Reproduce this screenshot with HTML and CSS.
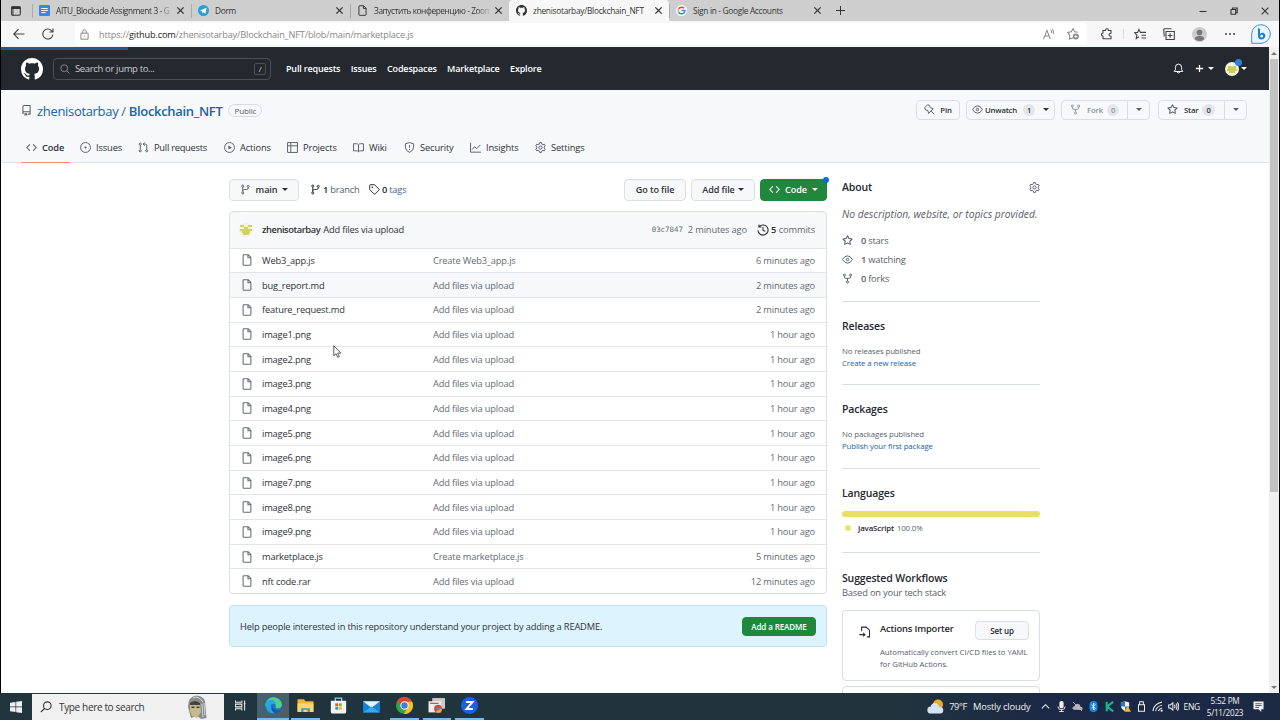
FILE: index.html
```html
<!DOCTYPE html>
<html lang="en">
<head>
  <meta charset="UTF-8" />
  <title>zhenisotarbay/Blockchain_NFT</title>
  <link rel="stylesheet" href="styles.css">
</head>
<body>
  <svg class="sprite">
    <symbol id="i-mark" viewBox="0 0 16 16"><path d="M8 0c4.42 0 8 3.58 8 8a8.013 8.013 0 0 1-5.45 7.59c-.4.08-.55-.17-.55-.38 0-.27.01-1.13.01-2.2 0-.75-.25-1.23-.54-1.48 1.78-.2 3.65-.88 3.65-3.95 0-.88-.31-1.59-.82-2.15.08-.2.36-1.02-.08-2.12 0 0-.67-.22-2.2.82-.64-.18-1.32-.27-2-.27-.68 0-1.36.09-2 .27-1.53-1.03-2.2-.82-2.2-.82-.44 1.1-.16 1.92-.08 2.12-.51.56-.82 1.28-.82 2.15 0 3.06 1.86 3.75 3.64 3.95-.23.2-.44.55-.51 1.07-.46.21-1.61.55-2.33-.66-.15-.24-.6-.83-1.23-.82-.67.01-.27.38.01.53.34.19.73.9.82 1.13.16.45.68 1.31 2.69.94 0 .67.01 1.3.01 1.49 0 .21-.15.45-.55.38A7.995 7.995 0 0 1 0 8c0-4.42 3.58-8 8-8Z"/></symbol>
    <symbol id="i-repo" viewBox="0 0 16 16"><path d="M2 2.5A2.5 2.5 0 0 1 4.5 0h8.75a.75.75 0 0 1 .75.75v12.5a.75.75 0 0 1-.75.75h-2.5a.75.75 0 0 1 0-1.5h1.75v-2h-8a1 1 0 0 0-.714 1.7.75.75 0 1 1-1.072 1.05A2.495 2.495 0 0 1 2 11.5Zm10.5-1h-8a1 1 0 0 0-1 1v6.708A2.486 2.486 0 0 1 4.5 9h8ZM5 12.25a.25.25 0 0 1 .25-.25h3.5a.25.25 0 0 1 .25.25v3.25a.25.25 0 0 1-.4.2l-1.45-1.087a.249.249 0 0 0-.3 0L5.4 15.7a.25.25 0 0 1-.4-.2Z"/></symbol>
    <symbol id="i-code" viewBox="0 0 16 16"><path d="m11.28 3.22 4.25 4.25a.75.75 0 0 1 0 1.06l-4.25 4.25a.749.749 0 0 1-1.275-.326.749.749 0 0 1 .215-.734L13.94 8l-3.72-3.72a.749.749 0 0 1 .326-1.275.749.749 0 0 1 .734.215Zm-6.56 0a.751.751 0 0 1 1.042.018.751.751 0 0 1 .018 1.042L2.06 8l3.72 3.72a.749.749 0 0 1-.326 1.275.749.749 0 0 1-.734-.215L.47 8.53a.75.75 0 0 1 0-1.06Z"/></symbol>
    <symbol id="i-star" viewBox="0 0 16 16"><path d="M8 .25a.75.75 0 0 1 .673.418l1.882 3.815 4.21.612a.75.75 0 0 1 .416 1.279l-3.046 2.97.719 4.192a.751.751 0 0 1-1.088.791L8 12.347l-3.766 1.98a.75.75 0 0 1-1.088-.79l.72-4.194L.818 6.374a.75.75 0 0 1 .416-1.28l4.21-.611L7.327.668A.75.75 0 0 1 8 .25Zm0 2.445L6.615 5.5a.75.75 0 0 1-.564.41l-3.097.45 2.24 2.184a.75.75 0 0 1 .216.664l-.528 3.084 2.769-1.456a.75.75 0 0 1 .698 0l2.77 1.456-.53-3.084a.75.75 0 0 1 .216-.664l2.24-2.183-3.096-.45a.75.75 0 0 1-.564-.41L8 2.694Z"/></symbol>
    <symbol id="i-issue" viewBox="0 0 16 16"><circle class="ln" cx="8" cy="8" r="7.2"/><circle cx="8" cy="8" r="1.5"/></symbol>
    <symbol id="i-play" viewBox="0 0 16 16"><circle class="ln" cx="8" cy="8" r="7.2"/><path d="M6.4 5v6l5-3Z"/></symbol>
    <symbol id="i-pull" viewBox="0 0 16 16"><g class="ln"><circle cx="3.3" cy="3.2" r="1.5"/><circle cx="3.3" cy="12.8" r="1.5"/><circle cx="12.7" cy="12.8" r="1.5"/><path d="M3.3 4.8v6.4M12.7 11.2V5q0-2-2-2H7.5M9.8.8 7.4 3l2.4 2.3"/></g></symbol>
    <symbol id="i-table" viewBox="0 0 16 16"><path class="ln" d="M.8.8h14.4v14.4H.8ZM.8 5.5h14.4M5.5.8v14.4"/></symbol>
    <symbol id="i-book" viewBox="0 0 16 16"><path class="ln" d="M8 4Q7 2.5 5 2.5H.8v10.3H5q2 0 3 1.4V4Q9 2.5 11 2.5h4.2v10.3H11q-2 0-3 1.4"/></symbol>
    <symbol id="i-shield" viewBox="0 0 16 16"><path class="ln" d="M8 .8 14 2.7v4.6q0 5.3-6 7.8-6-2.5-6-7.8V2.7Z"/><path class="ln" d="M8 4.3v4M8 10v1.6"/></symbol>
    <symbol id="i-graph" viewBox="0 0 16 16"><path class="ln" d="M.8 1v13.8H16M3 11l3.7-4.3 3 3L15 4.3"/></symbol>
    <symbol id="i-gear" viewBox="0 0 16 16"><path class="ln" d="M6.6.9h2.8l.5 2.2 1.4.8 2.2-.7 1.4 2.4-1.6 1.6v1.6l1.6 1.6-1.4 2.4-2.2-.7-1.4.8-.5 2.2H6.6l-.5-2.200-1.400-.8-2.200.7-1.400-2.400 1.600-1.600V7.200L1.100 5.600l1.400-2.400 2.200.7 1.400-.8Z"/><circle class="ln" cx="8" cy="8" r="2.300"/></symbol>
    <symbol id="i-pin" viewBox="0 0 16 16"><path class="ln" d="M5.300 1 1 5.300l1.200 3.400 3.300.5 1.300 4.500 3.300-3.500 3.400-3.400-4.300-1.500L7.800 2ZM10 10l5 5"/></symbol>
    <symbol id="i-eye" viewBox="0 0 16 16"><path class="ln" d="M.8 8Q3.800 2.700 8 2.700T15.200 8Q12.200 13.300 8 13.300T.8 8Z"/><circle class="ln" cx="8" cy="8" r="1.800"/></symbol>
    <symbol id="i-fork" viewBox="0 0 16 16"><g class="ln"><circle cx="3.500" cy="3" r="1.500"/><circle cx="12.500" cy="3" r="1.500"/><circle cx="8" cy="13.200" r="1.500"/><path d="M3.500 4.500V6Q3.500 7.800 5.300 7.800h5.400Q12.500 7.800 12.500 6V4.500M8 8v3.700"/></g></symbol>
    <symbol id="i-branch" viewBox="0 0 16 16"><g class="ln"><circle cx="4" cy="3" r="1.500"/><circle cx="4" cy="13" r="1.500"/><circle cx="12" cy="3.500" r="1.500"/><path d="M4 4.500v7M12 5v.7Q12 8 9.700 8H6.500Q4 8 4 10"/></g></symbol>
    <symbol id="i-tag" viewBox="0 0 16 16"><path class="ln" d="M2.200 1h5.200q.6 0 1 .4l6 6q.8.8 0 1.600l-5.400 5.400q-.8.8-1.600 0l-6-6Q1 8 1 7.400V2.200Q1 1 2.200 1Z"/><circle cx="4.900" cy="4.900" r="1.200"/></symbol>
    <symbol id="i-file" viewBox="0 0 16 16"><path class="ln" d="M3.800 1h5.800l3.600 3.600V14q0 1-1 1H3.800q-1 0-1-1V2q0-1 1-1ZM9.300 1v4h4"/></symbol>
    <symbol id="i-history" viewBox="0 0 16 16"><path class="ln" d="M1.200 8.500A6.800 6.800 0 1 0 3 3.400M2.500.8l.2 3.100 3.100.2M8 4v4.500l3 1.300"/></symbol>
    <symbol id="i-bell" viewBox="0 0 16 16"><path class="ln" d="M3.500 6.500Q3.500 1.500 8 1.500t4.500 5v3l1.700 2.800H1.800L3.500 9.500ZM6 13.500q2 2 4 0"/></symbol>
    <symbol id="i-search" viewBox="0 0 16 16"><circle class="ln" cx="6.800" cy="6.800" r="5.500"/><path class="ln" d="m11 11 4.300 4.300"/></symbol>
    <symbol id="i-x" viewBox="0 0 10 10"><path class="ln" d="m1.500 1.500 7 7m0-7-7 7"/></symbol>
    <symbol id="i-import" viewBox="0 0 16 16"><path class="ln" d="M3.500 7V1.500h6l4.500 4v9h-3.500M.5 11.500h7M5.500 9l2.500 2.500L5.500 14"/></symbol>
  </svg>

  <div class="window">
    <div class="tabstrip">
      <svg class="tabmenu" viewBox="0 0 10 10"><rect class="ln" x=".7" y=".7" width="8.600" height="8.600" rx="1.200"/><path d="M.5.5h9V3h-9Z"/><path d="M.5.5H3v9H.5Z" opacity=".4"/></svg>
      <div class="tab t1">
        <svg class="fav" viewBox="0 0 10 10"><rect width="10" height="10" rx="1" fill="#3f82e8"/><path d="M2 3.200h6M2 5h6M2 6.900h4" stroke="#fff" stroke-width=".9"/></svg>
        <span>AITU_Blockade Assignment 3 - G</span><svg class="x"><use href="#i-x"/></svg>
      </div>
      <div class="tab t2">
        <svg class="fav" viewBox="0 0 10 10"><circle cx="5" cy="5" r="5" fill="#2c9fd8"/><path d="m1.800 4.900 6-2.300-1.100 5.300-1.800-1.400-1 .9-.3-1.700Z" fill="#fff"/></svg>
        <span>Dorm</span><svg class="x"><use href="#i-x"/></svg>
      </div>
      <div class="tab t3">
        <svg class="fav"><use href="#i-file"/></svg>
        <span>Запустить конференцию - Zoom</span><svg class="x"><use href="#i-x"/></svg>
      </div>
      <div class="tab t4 active">
        <svg class="fav"><use href="#i-mark"/></svg>
        <span>zhenisotarbay/Blockchain_NFT</span><svg class="x"><use href="#i-x"/></svg>
      </div>
      <div class="tab t5">
        <svg class="fav" viewBox="0 0 12 12"><circle cx="6" cy="6" r="6" fill="#fff"/><g fill="none" stroke-width="1.700"><path d="M8.700 3.500A3.700 3.700 0 0 0 2.800 4.300" stroke="#e8453c"/><path d="M2.800 4.300a3.700 3.700 0 0 0 0 3.400" stroke="#f5b912"/><path d="M2.800 7.700a3.700 3.700 0 0 0 5.600 1.100" stroke="#38a853"/><path d="M8.400 8.800Q9.700 7.700 9.700 6H6" stroke="#4285f4"/></g></svg>
        <span>Sign in - Google Accounts</span><svg class="x"><use href="#i-x"/></svg>
      </div>
      <svg class="newtab" viewBox="0 0 10 10"><path class="ln" d="M5 0v10M0 5h10"/></svg>
      <div class="winctl">
        <svg viewBox="0 0 10 10"><path class="ln" d="M1.500 5.500h7"/></svg>
        <svg viewBox="0 0 10 10"><path class="ln" d="M2 3.500h4.700v4.700H2ZM3.500 3.500V2H8.200v4.700H6.700"/></svg>
        <svg viewBox="0 0 10 10"><path class="ln" d="m1.700 1.700 6.600 6.600m0-6.600-6.600 6.600"/></svg>
      </div>
    </div>

    <div class="toolbar">
      <svg class="back" viewBox="0 0 12 12"><path class="ln" d="M11.500 6H1M5.500 1.200.8 6l4.700 4.800"/></svg>
      <svg class="reload" viewBox="0 0 12 12"><path class="ln" d="M10.800 6.500A5 5 0 1 1 9.500 2.600L11 4M11 .5V4H7.500"/></svg>
      <div class="address">
        <svg class="lock" viewBox="0 0 10 12"><path class="ln" d="M1 4.500h8v6.700H1ZM3 4.500V3q0-2.300 2-2.300T7 3v1.500"/><circle cx="5" cy="7.800" r=".8"/></svg>
        <span class="url">https://<b>github.com</b>/zhenisotarbay/Blockchain_NFT/blob/main/marketplace.js</span>
        <svg class="read" viewBox="0 0 12 12"><path class="ln" d="m.6 11 3.700-9.500L8 11M2 7.700h4.700M8.300.8q1.500 1.500.8 3.500M10.300.3q1.700 2.200.8 5"/></svg>
        <svg class="addfav" viewBox="0 0 12 12"><path class="ln" d="M6 10 2.500 11l.3-3.800L.7 4.500l3.500-.7L6 .8l1.800 3 3 .5"/><circle cx="8.800" cy="8.500" r="3"/><path d="M7.200 8.500h3.200M8.800 6.900v3.200" stroke="#fff" stroke-width=".8"/></svg>
      </div>
      <div class="tools">
        <svg viewBox="0 0 12 12"><path class="ln" d="M2 2.500h2.500Q4.500.8 6 .8t1.500 1.700H10v2.800Q8 5.300 8 6.800T10 8.300v2.400H2V8.200Q.5 8 .5 6.600T2 5Z"/></svg>
        <i class="sep"></i>
        <svg viewBox="0 0 12 12"><path class="ln" d="M4.800 8.700 2.300 10.500l.6-3.300L.7 4.800 3.600 4.400 5 1.500l1.400 2.900H12M7.500 7.300H12M7.500 10H12"/></svg>
        <svg viewBox="0 0 12 12"><path class="ln" d="M3 3.500h8.300v8H3ZM1.300 8.500.7 1.500Q.7.700 2 .7h6.500M7.100 5.200v4.600M4.800 7.500h4.600"/></svg>
        <svg class="me" viewBox="0 0 16 16"><circle cx="8" cy="8" r="8" fill="#ccc"/><circle cx="8" cy="5.800" r="3" fill="#777"/><path d="M3 13q0-3.500 5-3.500t5 3.500q-5 4-10 0Z" fill="#777"/></svg>
        <svg class="dots" viewBox="0 0 12 12"><circle cx="2" cy="6" r="1"/><circle cx="6" cy="6" r="1"/><circle cx="10" cy="6" r="1"/></svg>
        <svg class="bing" viewBox="0 0 20 20"><path d="M.7 19.300V10A9.300 9.300 0 1 1 10 19.300Z" fill="#eaf5ff" stroke="#3c8fd6" stroke-width="1"/><path d="m7 4 2 .8v5.200q1.200-1.700 3.200-1.200 2.300.8 2.200 3.200-.5 3-3.600 3.400Q7.500 15.500 7 12.500Zm2.200 8.300q.3 1.500 1.800 1.200 1.300-.5 1.200-1.700-.4-1.400-1.700-1-1.200.4-1.300 1.500Z" fill="#1a7fd4" fill-rule="evenodd"/></svg>
      </div>
    </div>

    <div class="viewport">
      <div class="page">
        <i class="progress"></i>
        <header class="gh-header">
          <svg class="logo"><use href="#i-mark"/></svg>
          <div class="gh-search"><svg><use href="#i-search"/></svg><span>Search or jump to...</span><kbd>/</kbd></div>
          <nav><a>Pull requests</a><a>Issues</a><a>Codespaces</a><a>Marketplace</a><a>Explore</a></nav>
          <div class="gh-user">
            <svg class="bell"><use href="#i-bell"/></svg>
            <svg class="plus" viewBox="0 0 10 10"><path class="ln" d="M5 1v8M1 5h8"/></svg><i class="caret"></i>
            <span class="avatar"><svg viewBox="0 0 14 14"><circle cx="7" cy="7" r="7" fill="#f4f3dc"/><path d="M3 4h3l1 1 1-1h3v3h1v2h-2v2H4V9H2V7h1Z" fill="#c9cf58"/></svg><i></i></span><i class="caret"></i>
          </div>
        </header>

        <div class="repo-head">
          <div class="repo-title">
            <svg><use href="#i-repo"/></svg>
            <a class="owner">zhenisotarbay</a><span class="slash">/</span><a class="repo">Blockchain_NFT</a>
            <span class="public">Public</span>
            <div class="actions">
              <div class="btn pin"><svg><use href="#i-pin"/></svg><span>Pin</span></div>
              <div class="btn watch"><svg><use href="#i-eye"/></svg><span>Unwatch</span><em>1</em><i class="caret"></i></div>
              <div class="btn split fork"><svg><use href="#i-fork"/></svg><span>Fork</span><em>0</em><div class="drop"><i class="caret"></i></div></div>
              <div class="btn split starbtn"><svg><use href="#i-star"/></svg><span>Star</span><em>0</em><div class="drop"><i class="caret"></i></div></div>
            </div>
          </div>
          <div class="repo-nav">
            <a class="n1 active"><svg><use href="#i-code"/></svg>Code</a>
            <a class="n2"><svg><use href="#i-issue"/></svg>Issues</a>
            <a class="n3"><svg><use href="#i-pull"/></svg>Pull requests</a>
            <a class="n4"><svg><use href="#i-play"/></svg>Actions</a>
            <a class="n5"><svg><use href="#i-table"/></svg>Projects</a>
            <a class="n6"><svg><use href="#i-book"/></svg>Wiki</a>
            <a class="n7"><svg><use href="#i-shield"/></svg>Security</a>
            <a class="n8"><svg><use href="#i-graph"/></svg>Insights</a>
            <a class="n9"><svg><use href="#i-gear"/></svg>Settings</a>
          </div>
        </div>

        <div class="container">
          <main>
            <div class="file-nav">
              <div class="btn branch"><svg><use href="#i-branch"/></svg><span>main</span><i class="caret"></i></div>
              <a class="stat s1"><svg><use href="#i-branch"/></svg><b>1</b> branch</a>
              <a class="stat s2"><svg><use href="#i-tag"/></svg><b>0</b> <span>tags</span></a>
              <div class="btn goto">Go to file</div>
              <div class="btn add">Add file<i class="caret"></i></div>
              <div class="btn green code"><svg><use href="#i-code"/></svg>Code<i class="caret"></i><i class="dot"></i></div>
            </div>

            <div class="files">
              <div class="commit">
                <svg class="ava" viewBox="0 0 14 14"><rect width="14" height="14" rx="7" fill="#f3f2dc"/><path d="M1 2h4v2H1ZM9 2h4v2H9ZM5 4h4v2h4v2h-2v2h-1v2H4v-2H3V8H1V6h4Z" fill="#cfd35f"/></svg>
                <b>zhenisotarbay</b><span class="msg">Add files via upload</span>
                <code>03c7847</code><span class="ago">2 minutes ago</span>
                <svg class="hist"><use href="#i-history"/></svg><b class="num">5</b><span class="commits">commits</span>
              </div>
              <div class="row"><svg><use href="#i-file"/></svg><a>Web3_app.js</a><span>Create Web3_app.js</span><time>6 minutes ago</time></div>
              <div class="row hover"><svg><use href="#i-file"/></svg><a>bug_report.md</a><span>Add files via upload</span><time>2 minutes ago</time></div>
              <div class="row"><svg><use href="#i-file"/></svg><a>feature_request.md</a><span>Add files via upload</span><time>2 minutes ago</time></div>
              <div class="row"><svg><use href="#i-file"/></svg><a>image1.png</a><span>Add files via upload</span><time>1 hour ago</time></div>
              <div class="row"><svg><use href="#i-file"/></svg><a>image2.png</a><span>Add files via upload</span><time>1 hour ago</time></div>
              <div class="row"><svg><use href="#i-file"/></svg><a>image3.png</a><span>Add files via upload</span><time>1 hour ago</time></div>
              <div class="row"><svg><use href="#i-file"/></svg><a>image4.png</a><span>Add files via upload</span><time>1 hour ago</time></div>
              <div class="row"><svg><use href="#i-file"/></svg><a>image5.png</a><span>Add files via upload</span><time>1 hour ago</time></div>
              <div class="row"><svg><use href="#i-file"/></svg><a>image6.png</a><span>Add files via upload</span><time>1 hour ago</time></div>
              <div class="row"><svg><use href="#i-file"/></svg><a>image7.png</a><span>Add files via upload</span><time>1 hour ago</time></div>
              <div class="row"><svg><use href="#i-file"/></svg><a>image8.png</a><span>Add files via upload</span><time>1 hour ago</time></div>
              <div class="row"><svg><use href="#i-file"/></svg><a>image9.png</a><span>Add files via upload</span><time>1 hour ago</time></div>
              <div class="row"><svg><use href="#i-file"/></svg><a>marketplace.js</a><span>Create marketplace.js</span><time>5 minutes ago</time></div>
              <div class="row"><svg><use href="#i-file"/></svg><a>nft code.rar</a><span>Add files via upload</span><time>12 minutes ago</time></div>
            </div>

            <div class="readme"><span>Help people interested in this repository understand your project by adding a README.</span><div class="btn green">Add a README</div></div>
          </main>

          <aside>
            <section class="about">
              <h2>About <svg><use href="#i-gear"/></svg></h2>
              <p class="desc">No description, website, or topics provided.</p>
              <p class="meta"><svg><use href="#i-star"/></svg><b>0</b> stars</p>
              <p class="meta"><svg><use href="#i-eye"/></svg><b>1</b> watching</p>
              <p class="meta"><svg><use href="#i-fork"/></svg><b>0</b> forks</p>
            </section>
            <section class="small">
              <h2>Releases</h2>
              <p>No releases published</p>
              <p><a>Create a new release</a></p>
            </section>
            <section class="small">
              <h2>Packages</h2>
              <p>No packages published</p>
              <p><a>Publish your first package</a></p>
            </section>
            <section class="langs">
              <h2>Languages</h2>
              <div class="bar"></div>
              <p><i></i><b>JavaScript</b> 100.0%</p>
            </section>
            <section class="flows">
              <h2>Suggested Workflows</h2>
              <p>Based on your tech stack</p>
              <div class="card">
                <svg><use href="#i-import"/></svg>
                <div class="card-body">
                  <div class="card-top"><b>Actions Importer</b><div class="btn">Set up</div></div>
                  <p>Automatically convert CI/CD files to YAML<br>for GitHub Actions.</p>
                </div>
              </div>
              <div class="card"></div>
            </section>
          </aside>
        </div>
      </div>
      <div class="scroll"><i class="up"></i><div class="thumb"></div><i class="down"></i></div>
    </div>
  </div>

  <div class="taskbar">
    <svg class="start" viewBox="0 0 12 12"><path d="M0 1.700 5.500.9v4.700H0ZM6.200.8 12 0v5.600H6.200ZM0 6.300h5.500V11L0 10.300ZM6.200 6.300H12V12l-5.800-.8Z"/></svg>
    <div class="find">
      <svg class="glass" viewBox="0 0 12 12"><circle class="ln" cx="7.300" cy="4.700" r="3.800"/><path class="ln" d="M4.500 7.500.8 11.200"/></svg>
      <span>Type here to search</span>
      <svg class="helmet" viewBox="0 0 20 24"><path d="M1 12Q1 1 10 .5 19 1 18.500 12L19.500 23 14 24 10 21 4 23Z" fill="#8a8d8d"/><path d="M3 9q4-6 10-1l1 9-4 6-5-2-2-5Z" fill="#c8b98d"/><path d="M3 8q5-4 10 0v2H3ZM4.500 11.500h3v1.500h-3ZM9.500 11.500h3v1.500h-3Z" fill="#43403a"/><path d="M6 3q5-3 10 4M15 9l1 13M17 8l1 12" stroke="#d2d5d5" fill="none"/></svg>
    </div>
    <div class="apps">
      <div><svg class="view" viewBox="0 0 12 12"><path class="ln" d="M.5.500v2h7v-2M.5 4.500h7v3h-7ZM.5 11.500v-2h7v2M10.500.5v11M9.500 4h2"/></svg></div>
      <div class="run cur"><svg viewBox="0 0 16 16"><circle cx="8" cy="8" r="8" fill="#1b76c8"/><path d="M1 5Q4-1 10 .5q6 2 6 7-1 4-6 3 1-6-4-5.500Q2 5 .3 9Q0 7 1 5Z" fill="#4fd08b"/><path d="M.5 6Q4 1 8.500 3.500q2 1.500 1.500 4Q7 5 5.500 8q-1 5 4.500 7Q1 16.500.5 6Z" fill="#2aa6de"/><path d="M7 8q0 4 5 4.500 2 0 3.200-.8-1.500 3-5 4Q5 14 7 8Z" fill="#155a9f"/></svg></div>
      <div class="run"><svg viewBox="0 0 16 16"><path d="M.5 2h6l1.500 2h7.500v10H.5Z" fill="#f2b737"/><path d="M.5 6h15v8H.5Z" fill="#fcd770"/><path d="M4 14v-3.500h8V14h-2v-2H6v2Z" fill="#3f8fd0"/></svg></div>
      <div><svg viewBox="0 0 16 16"><path d="M5 4V1h6v3" fill="none" stroke="#8bd0f5" stroke-width="1.200"/><path d="M.8 3.500h14.400V14q0 1.500-1.500 1.500H2.300Q.8 15.500.8 14Z" fill="#f3f3f3"/><path d="M5 6h2.700v2.700H5Z" fill="#e8502f"/><path d="M8.300 6H11v2.700H8.300Z" fill="#75b72a"/><path d="M5 9.300h2.700V12H5Z" fill="#1d9fe0"/><path d="M8.300 9.300H11V12H8.300Z" fill="#f5b81f"/></svg></div>
      <div><svg viewBox="0 0 16 16"><path d="M0 4h16v10.500H0Z" fill="#1682d2"/><path d="M0 4h16L8 10Z" fill="#e4f4fc"/><path d="M0 14.500 8 9l8 5.500Z" fill="#35a9ec"/></svg></div>
      <div class="run"><svg viewBox="0 0 16 16"><circle cx="8" cy="8" r="8" fill="#34a34f"/><path d="M8 8 1.100 4A8 8 0 0 1 14.900 4Z" fill="#e54335"/><path d="M8 4.500h7.200A8 8 0 0 1 7.500 16L11.500 9Z" fill="#fbc116"/><circle cx="8" cy="8" r="3.900" fill="#fff"/><circle cx="8" cy="8" r="3" fill="#3c7de6"/></svg></div>
      <div class="run"><svg viewBox="0 0 16 16"><path d="M4 1h12v10H4Z" fill="#c9c9c9"/><path d="M.5 4h12v10.500H.5Z" fill="#f0eeec"/><path d="M2 6h8" stroke="#d05149" stroke-width="1.200"/><circle cx="9.500" cy="11" r="3.700" fill="#d9473c"/><path d="M9.500 11h3.700a3.700 3.700 0 0 1-5.700 3.100Z" fill="#dfb437"/><circle cx="9.500" cy="11" r="1.600" fill="#4b86da"/></svg></div>
      <div class="run"><svg viewBox="0 0 16 16"><circle cx="8" cy="8" r="8" fill="#1763e6"/><path d="M4.800 4.800h6L5.200 11.200h6" fill="none" stroke="#fff" stroke-width="1.900"/></svg></div>
    </div>
    <div class="tray">
      <svg class="weather" viewBox="0 0 18 15"><circle cx="11" cy="5.500" r="5" fill="#f2a62c"/><path d="M4 14.500a3.500 3.500 0 0 1-.3-7Q4.500 4 8 4q3.500.3 4 3.800 4 0 4.300 3.200 0 3.500-3.300 3.500Z" fill="#d5e2f4"/></svg>
      <span class="temp">79°F</span><span class="sky">Mostly cloudy</span>
      <svg viewBox="0 0 12 12"><path class="ln" d="m2 8 4-4 4 4"/></svg>
      <svg viewBox="0 0 12 12"><rect x="3.700" y="0" width="4.600" height="8" rx="2"/><path d="M2 6q0 3.500 4 3.500T10 6M6 9v3M3.500 11.500h5" fill="none" stroke="currentColor"/></svg>
      <svg viewBox="0 0 12 12" opacity=".7"><path d="M2 9.500Q0 9 .5 7.200q.6-1.500 2-1.200Q3.500 3 6 3q3 .3 3.300 3.200Q12 6.500 11.500 9q-.5 1-2 .8Z"/><path d="m1 1 10 10" stroke="#fff"/></svg>
      <svg viewBox="0 0 12 12"><rect x="1.700" width="8.600" height="12" rx="4" fill="#1687e8"/><path d="m3.800 4 4 4L6 9.800V2.200L7.800 4l-4 4" fill="none" stroke="#fff" stroke-width=".9"/></svg>
      <svg viewBox="0 0 12 12"><path d="M3 .8v10.400M10 .8 3.500 6.300 10 11.200" fill="none" stroke="#17b890" stroke-width="2.300"/></svg>
      <svg viewBox="0 0 12 12"><path d="M1 1.500 5.500.3 10 1.500v4Q10 9 5.500 11 1 9 1 5.500Z" fill="#f4f4f4"/><path d="M5.500.3V6H1V1.500ZM5.500 6H10Q9.500 9 5.500 11Z" fill="#2977bd"/><path d="m8.300 5.500 3.700 6.300H4.700Z" fill="#f4b826"/></svg>
      <svg viewBox="0 0 12 12"><path class="ln" d="M4 4V.7h4V4M2.700 4h6.600v7.300H2.700Z"/></svg>
      <svg viewBox="0 0 12 12"><path class="ln" d="M1 11Q2 3 11 1M4 11q1-5 7-6.500M7 11q1-2.500 4-3.500"/><circle cx="10.500" cy="10.500" r="1.200"/></svg>
      <svg viewBox="0 0 12 12"><path class="ln" d="M.7 4.300h2L5.300 2v8L2.700 7.700h-2ZM7 4q1.300 2 0 4M8.700 2.700q2.300 3.300 0 6.600M10.300 1.500q3 4.500 0 9"/></svg>
      <span class="lang">ENG</span>
      <span class="clock">5:52 PM<br>5/11/2023</span>
      <svg class="note" viewBox="0 0 12 12"><path d="M.5.500h11v8.500H9V12L6 9H.5Z"/><path d="M2.500 3h7M2.500 5h7M2.500 7h4" stroke="#1c2b45" stroke-width=".8"/></svg>
    </div>
  </div>

  <svg class="cursor" viewBox="0 0 9 13"><path d="M.8.8v10l2.300-2.100 1.600 3.600 1.600-.7-1.600-3.500h3.200Z" fill="#fff" stroke="#333" stroke-width=".8"/></svg>
</body>
</html>
```

FILE: styles.css
```css
* {
  box-sizing: border-box;
}

html, body {
  margin: 0;
  padding: 0;
  font-family: "Open Sans", "Noto Sans", sans-serif;
  font-size: 9.3px;
  letter-spacing: -0.17px;
  color: #2d3238;
  background: #fff;
  overflow: hidden;
}

body {
  display: flex;
  flex-direction: column;
  width: 1280px;
  height: 720px;
}

svg {
  flex: none;
  fill: currentColor;
}

.ln {
  fill: none;
  stroke: currentColor;
  stroke-width: 1.4;
}

.tabstrip .ln, .toolbar .ln, .taskbar .ln {
  stroke-width: 1.1;
}

.sprite {
  display: none;
}

h2, p {
  margin: 0;
}

b {
  font-weight: 600;
}

.window {
  flex: 1;
  min-height: 0;
  display: flex;
  flex-direction: column;
  border-left: 1px solid #000;
  border-right: 1px solid #000;
}

/* browser tabs */
.tabstrip {
  display: flex;
  align-items: center;
  height: 21px;
  flex: none;
  background: #cecece;
  color: #333;
  font-size: 8.3px;
  letter-spacing: -0.3px;
}

.tabmenu {
  width: 10px;
  height: 10px;
  margin-left: 10px;
}

.tab {
  display: flex;
  align-items: center;
  height: 21px;
  padding-left: 7px;
  position: relative;
}

.tab::before {
  content: "";
  width: 1px;
  height: 14px;
  background: #aaa;
  position: absolute;
  left: 0;
}

.t1 { width: 159px; margin-left: 11px; }
.t2 { width: 159px; }
.t3 { width: 159px; }
.t4 { width: 160px; }
.t5 { width: 159px; }

.tab .fav {
  width: 11px;
  height: 11px;
  margin-right: 6px;
}

.tab span {
  flex: 1;
  overflow: hidden;
  white-space: nowrap;
  margin-right: 3px;
}

.t1 span, .t3 span {
  -webkit-mask-image: linear-gradient(90deg, #000 88%, transparent);
}

.t1 span { letter-spacing: -0.36px; }
.t3 span { letter-spacing: -0.42px; }
.t4 span { letter-spacing: -0.26px; }

.tab .x {
  width: 9px;
  height: 9px;
  margin-right: 6px;
}

.tab.active {
  background: #f7f7f7;
  border-radius: 4px 4px 0 0;
}

.active::before {
  display: none;
}

.newtab {
  width: 9px;
  height: 9px;
  margin-left: 8px;
}

.winctl {
  display: flex;
  gap: 21px;
  margin-left: auto;
  margin-right: 9px;
}

.winctl svg {
  width: 10px;
  height: 10px;
}

.toolbar {
  display: flex;
  align-items: center;
  flex: none;
  height: 26px;
  background: #f7f7f7;
  color: #444;
}

.back {
  width: 12px;
  height: 12px;
  margin-left: 12px;
}

.reload {
  width: 12px;
  height: 12px;
  margin-left: 17px;
}

.address {
  display: flex;
  align-items: center;
  width: 1012px;
  height: 22px;
  margin-left: 21px;
  background: #fff;
  border-radius: 3px;
  color: #888;
}

.lock {
  width: 9px;
  height: 11px;
  margin-left: 5px;
}

.url {
  margin-left: 10px;
  font-size: 9.2px;
}

.url b {
  font-weight: 400;
  color: #222;
}

.read {
  width: 11px;
  height: 11px;
  margin-left: auto;
}

.addfav {
  width: 12px;
  height: 12px;
  margin: 0 8px 0 13px;
}

.tools {
  display: flex;
  align-items: center;
  margin-left: 14px;
  gap: 17px;
}

.tools svg {
  width: 12px;
  height: 12px;
}

.sep {
  width: 1px;
  height: 10px;
  margin: 0 -7px;
  background: #ddd;
}

.tools .me {
  width: 15px;
  height: 15px;
}

.tools .bing {
  width: 20px;
  height: 20px;
  margin-left: -2px;
}

/* page */
.viewport {
  display: flex;
  flex: 1;
  min-height: 0;
}

.page {
  flex: 1;
  overflow: hidden;
  position: relative;
}

.progress {
  position: absolute;
  left: 0;
  top: 0;
  width: 127px;
  height: 3px;
  background: #1b5c9e;
}

.scroll {
  width: 10px;
  background: #f0f0f0;
  display: flex;
  flex-direction: column;
  align-items: center;
}

.up, .down {
  border: 3px solid transparent;
  border-bottom-color: #777;
  border-top: 0;
  margin: 5px 0 4px;
}

.thumb {
  width: 8px;
  height: 433px;
  background: #c2c2c2;
}

.down {
  border: 3px solid transparent;
  border-top-color: #777;
  border-bottom: 0;
  margin: auto 0 4px;
}

.caret {
  border: 3px solid transparent;
  border-top-color: currentColor;
  border-bottom: 0;
}

.gh-header {
  display: flex;
  align-items: center;
  height: 43px;
  padding-left: 20px;
  background: #24292f;
  color: #fff;
}

.logo {
  width: 22px;
  height: 22px;
}

.gh-search {
  display: flex;
  align-items: center;
  width: 218px;
  height: 22px;
  margin-left: 10px;
  padding: 0 4px 0 6px;
  border: 1px solid #4b5056;
  border-radius: 4px;
  color: #c9cccf;
  font-size: 9.5px;
  letter-spacing: -0.35px;
}

.gh-search span {
  letter-spacing: -0.35px;
}

.gh-search svg {
  width: 10px;
  height: 10px;
  margin-right: 5px;
  color: #8a8f94;
}

.gh-search kbd {
  margin-left: auto;
  width: 12px;
  height: 12px;
  border: 1px solid #4b5056;
  border-radius: 2px;
  font: 8px/10px "Open Sans", sans-serif;
  text-align: center;
}

.gh-header nav {
  display: flex;
  gap: 10.5px;
  margin-left: 15px;
  font-weight: 600;
  font-size: 9px;
}

.gh-user {
  display: flex;
  align-items: center;
  margin-left: auto;
  margin-right: 22px;
}

.bell {
  width: 11px;
  height: 11px;
  margin-right: 11px;
}

.plus {
  width: 9px;
  height: 9px;
  margin-right: 4px;
}

.avatar {
  position: relative;
  height: 14px;
  margin: 0 2px 0 11px;
}

.avatar svg {
  width: 14px;
  height: 14px;
}

.avatar i {
  position: absolute;
  right: -3px;
  top: -3px;
  width: 7px;
  height: 7px;
  border-radius: 50%;
  background: #2f7fdc;
}

.repo-head {
  height: 73px;
  padding: 9px 22px 0 20px;
  background: #f6f8fa;
  border-bottom: 1px solid #e1e4e8;
}

.repo-title {
  display: flex;
  align-items: center;
  height: 23px;
  font-size: 13px;
  letter-spacing: -0.32px;
}

.repo-title > svg {
  width: 11px;
  height: 11px;
  margin-right: 5px;
  color: #57606a;
}

.owner, .repo {
  color: #22639f;
}

.repo {
  font-weight: 600;
}

.slash {
  margin: 0 3px;
  color: #57606a;
}

.public {
  margin-left: 6px;
  padding: 0 5px;
  border: 1px solid #d8dce1;
  border-radius: 8px;
  font-size: 8px;
  letter-spacing: -0.1px;
  line-height: 11px;
  color: #57606a;
}

.actions {
  display: flex;
  gap: 6px;
  margin-left: auto;
  margin-bottom: 2px;
}

.btn {
  display: flex;
  align-items: center;
  justify-content: center;
  border: 1px solid #dcdfe2;
  border-radius: 4px;
  background: #f6f8fa;
  font-weight: 600;
  font-size: 9.1px;
  letter-spacing: -0.1px;
  white-space: nowrap;
}

.actions .btn {
  height: 20px;
  font-size: 7.8px;
  letter-spacing: -0.2px;
}

.actions .btn svg {
  width: 11px;
  height: 11px;
  color: #57606a;
}

.btn em {
  font-style: normal;
  background: #e3e6e9;
  border-radius: 6px;
  padding: 0 4px;
  margin-left: 4px;
  font-size: 7.5px;
  line-height: 12px;
}

.pin { width: 44px; gap: 5px; }
.watch { width: 89px; gap: 2px; }
.watch .caret { margin-left: 6px; }
.actions .fork { width: 89px; color: #8c959f; }
.actions .fork > svg { color: #8c959f; }
.starbtn { width: 89px; margin-left: 2px; }

.split span {
  margin-left: 6px;
}

.split .drop {
  display: flex;
  align-items: center;
  justify-content: center;
  width: 22px;
  height: 18px;
  margin-left: auto;
  border-left: 1px solid #d8dbde;
  color: #57606a;
}

.actions .split {
  justify-content: flex-start;
  padding-left: 8px;
}

.repo-nav {
  display: flex;
  height: 41px;
  padding-top: 10px;
  letter-spacing: -0.12px;
}

.repo-nav a {
  display: flex;
  align-items: center;
  height: 31px;
  padding-left: 5px;
}

.repo-nav svg {
  width: 11px;
  height: 11px;
  margin-right: 5px;
  color: #57606a;
}

.repo-nav .active {
  font-weight: 600;
  border-bottom: 1.5px solid #fd8c73;
}

.n1 { width: 49px; margin-right: 5px; }
.n2 { width: 58px; }
.n3 { width: 86px; letter-spacing: -0.25px; }
.n4 { width: 63px; }
.n5 { width: 66px; }
.n6 { width: 51px; }
.n7 { width: 66px; }
.n8 { width: 65px; }

.container {
  display: flex;
  gap: 15px;
  padding: 16px 0 0 228px;
}

main {
  width: 598px;
}

.file-nav {
  display: flex;
  align-items: center;
  height: 21px;
}

.file-nav .btn {
  height: 22px;
}

.file-nav svg {
  width: 11px;
  height: 11px;
}

.branch {
  width: 70px;
  gap: 5px;
}

.branch svg {
  color: #57606a;
}

.stat {
  display: flex;
  align-items: center;
  gap: 2px;
  color: #57606a;
}

.stat b, .stat svg {
  color: #24292f;
}

.s1 { width: 59px; margin-left: 11px; }
.s2 { color: #46658c; }

.goto {
  width: 62px;
  margin-left: auto;
}

.add {
  width: 64px;
  margin-left: 5px;
  gap: 3px;
}

.green {
  background: #1f883d;
  border-color: #1f883d;
  color: #fff;
}

.code {
  width: 67px;
  margin-left: 5px;
  gap: 5px;
  position: relative;
}

.dot {
  position: absolute;
  right: -3px;
  top: -3px;
  width: 6px;
  height: 6px;
  border-radius: 50%;
  background: #0969da;
}

.files {
  margin-top: 11px;
  border: 1px solid #d8dee4;
  border-radius: 4px;
  color: #636b74;
}

.commit {
  display: flex;
  align-items: center;
  height: 35.5px;
  padding: 0 11px 0 9px;
  background: #f6f8fa;
  border-radius: 4px 4px 0 0;
}

.ava {
  width: 14px;
  height: 14px;
  margin-right: 9px;
}

.commit b, .msg {
  color: #2d3238;
}

.commit b {
  letter-spacing: -0.42px;
}

.msg {
  margin-left: 3px;
}

.commit code {
  margin-left: auto;
  font: 7.4px "DejaVu Sans Mono", monospace;
  letter-spacing: 0;
}

.ago {
  margin-left: 5px;
}

.hist {
  width: 12px;
  height: 12px;
  margin: 0 2px 0 10px;
  color: #24292f;
}

.commits {
  margin-left: 3px;
}

.row {
  display: flex;
  align-items: center;
  height: 24.7px;
  padding: 0 11px;
  border-top: 1px solid #e1e4e8;
}

.row svg {
  width: 12px;
  height: 12px;
  margin-right: 9px;
}

.row a {
  width: 171px;
  color: #2d3238;
}

.row time {
  margin-left: auto;
}

.hover {
  background: #f6f8fa;
}

.readme {
  display: flex;
  align-items: center;
  justify-content: space-between;
  height: 42px;
  margin-top: 11px;
  padding: 0 10px;
  background: #ddf4ff;
  border: 1px solid #c3e2f1;
  border-radius: 4px;
}

.readme .btn {
  width: 74px;
  height: 19px;
  font-size: 8px;
}

/* sidebar */
aside {
  width: 198px;
  color: #57606a;
}

aside h2 {
  display: flex;
  justify-content: space-between;
  align-items: center;
  height: 16px;
  font-size: 10.5px;
  letter-spacing: -0.15px;
  font-weight: 600;
  color: #24292f;
}

aside section {
  border-bottom: 1px solid #d8dee4;
}

.about {
  height: 123px;
}

.about h2 svg {
  width: 11px;
  height: 11px;
  color: #57606a;
}

.desc {
  margin: 11px 0 9px;
  line-height: 16px;
  font-size: 10.3px;
  letter-spacing: 0;
  font-style: italic;
  white-space: nowrap;
}

.meta {
  display: flex;
  align-items: center;
  gap: 2px;
  height: 19.2px;
}

.meta svg {
  width: 11px;
  height: 11px;
  margin-right: 6px;
}

.small {
  height: 83.4px;
  padding-top: 16px;
  font-size: 7.8px;
  letter-spacing: -0.1px;
  line-height: 12px;
}

.small h2 {
  margin-bottom: 11px;
}

.small a {
  color: #22639f;
}

.langs {
  height: 84px;
  padding-top: 16px;
  font-size: 7.9px;
}

.bar {
  height: 6px;
  margin: 10px 0 6px;
  border-radius: 3px;
  background: #ebdd66;
}

.langs p {
  display: flex;
  align-items: center;
  gap: 3px;
}

.langs p i {
  width: 6px;
  height: 6px;
  margin: 0 4px 0 3px;
  border-radius: 50%;
  background: #e6e66a;
}

.langs p b {
  color: #24292f;
}

aside .flows {
  padding-top: 17px;
  border: 0;
}

.flows > p {
  line-height: 13px;
}

.card {
  display: flex;
  height: 71px;
  margin-top: 11px;
  padding: 10px 10px 0 16px;
  border: 1px solid #d8dee4;
  border-radius: 4px;
}

.card + .card {
  margin-top: 5px;
}

.card > svg {
  width: 12px;
  height: 12px;
  margin: 5px 9px 0 0;
  color: #24292f;
}

.card-body {
  flex: 1;
}

.card-top {
  display: flex;
  justify-content: space-between;
}

.card-top b {
  line-height: 16px;
  font-size: 9.4px;
  color: #24292f;
}

.card .btn {
  width: 54px;
  height: 19px;
  font-size: 8px;
  color: #24292f;
}

.card p {
  margin-top: 6px;
  font-size: 7.8px;
  line-height: 12px;
  letter-spacing: -0.06px;
  white-space: nowrap;
}

/* taskbar */
.taskbar {
  display: flex;
  align-items: center;
  flex: none;
  height: 27px;
  background: linear-gradient(90deg, #20353d, #21343e 70%, #1b2846 82%, #1c2a44);
  color: #f0f0f0;
}

.start {
  width: 12px;
  height: 12px;
  margin: 0 10px;
}

.find {
  display: flex;
  align-items: center;
  width: 192px;
  height: 26px;
  padding-left: 8px;
  background: #f0f0f0;
  color: #333;
  font-size: 10px;
  letter-spacing: -0.35px;
}

.glass {
  width: 12px;
  height: 12px;
  margin-right: 7px;
}

.helmet {
  width: 20px;
  height: 24px;
  margin-left: auto;
  margin-right: 17px;
}

.apps {
  display: flex;
}

.apps div {
  display: flex;
  align-items: center;
  justify-content: center;
  width: 28.9px;
  height: 27px;
  margin: 0 1.95px;
  border-bottom: 2px solid transparent;
}

.apps svg {
  width: 17px;
  height: 17px;
}

.apps .view {
  width: 11px;
  height: 11px;
}

.apps .run {
  border-bottom-color: #76b9ed;
}

.apps .cur {
  background: #48606d;
  width: 32px;
  margin: 0 .4px;
}

.tray {
  display: flex;
  align-items: center;
  margin-left: auto;
  margin-right: 16px;
  font-size: 9.3px;
  letter-spacing: -0.15px;
}

.tray svg {
  width: 11px;
  height: 11px;
  margin-right: 5px;
}

.tray .weather {
  width: 18px;
  height: 15px;
  margin-right: 4px;
}

.temp {
  letter-spacing: -0.4px;
  margin-right: 6px;
}

.sky {
  margin-right: 9px;
}

.lang {
  font-size: 8.5px;
  letter-spacing: -0.3px;
}

.clock {
  width: 38px;
  margin: 0 9px 0 6px;
  text-align: center;
  font-size: 8.2px;
  line-height: 12px;
  letter-spacing: -0.25px;
}

.tray .note {
  margin-right: 0;
}

.cursor {
  position: absolute;
  left: 333px;
  top: 345px;
  width: 9px;
  height: 13px;
}
```
